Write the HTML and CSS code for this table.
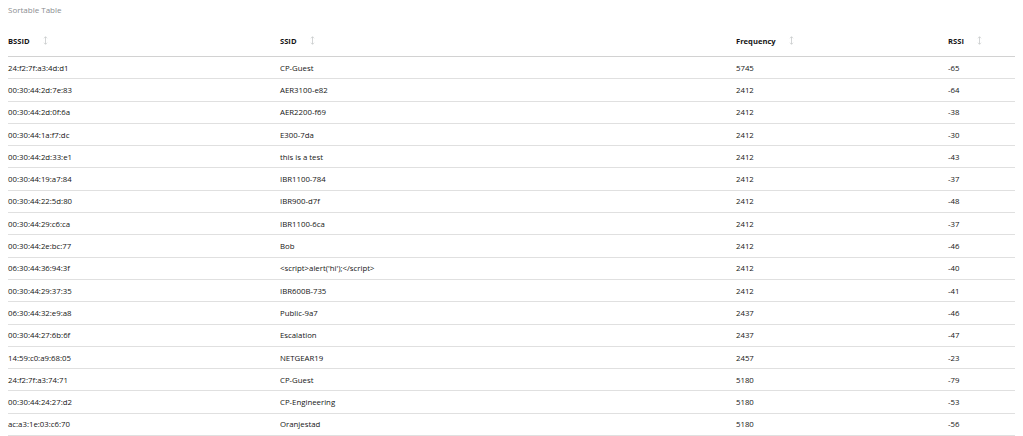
FILE: index.html
```html
<!DOCTYPE html>
<html>
<head>
<meta charset="utf-8">
<link rel="stylesheet" href="styles.css">
</head>
<body>
<div class="page">
  <div class="caption">Sortable Table</div>
  <table class="tbl">
    <colgroup>
      <col class="c1"><col class="c2"><col class="c3"><col class="c4">
    </colgroup>
    <thead>
      <tr>
        <th><span class="th">BSSID<svg class="sort" viewBox="0 0 6 10"><path d="M3 0.5V9.5M1.2 2.3L3 0.5 4.8 2.3M1.2 7.7L3 9.5 4.8 7.7"/></svg></span></th>
        <th><span class="th">SSID<svg class="sort" viewBox="0 0 6 10"><path d="M3 0.5V9.5M1.2 2.3L3 0.5 4.8 2.3M1.2 7.7L3 9.5 4.8 7.7"/></svg></span></th>
        <th><span class="th">Frequency<svg class="sort" viewBox="0 0 6 10"><path d="M3 0.5V9.5M1.2 2.3L3 0.5 4.8 2.3M1.2 7.7L3 9.5 4.8 7.7"/></svg></span></th>
        <th><span class="th">RSSI<svg class="sort" viewBox="0 0 6 10"><path d="M3 0.5V9.5M1.2 2.3L3 0.5 4.8 2.3M1.2 7.7L3 9.5 4.8 7.7"/></svg></span></th>
      </tr>
    </thead>
    <tbody>
      <tr><td>24:f2:7f:a3:4d:d1</td><td>CP-Guest</td><td>5745</td><td>-65</td></tr>
      <tr><td>00:30:44:2d:7e:83</td><td>AER3100-e82</td><td>2412</td><td>-64</td></tr>
      <tr><td>00:30:44:2d:0f:6a</td><td>AER2200-f69</td><td>2412</td><td>-38</td></tr>
      <tr><td>00:30:44:1a:f7:dc</td><td>E300-7da</td><td>2412</td><td>-30</td></tr>
      <tr><td>00:30:44:2d:33:e1</td><td>this is a test</td><td>2412</td><td>-43</td></tr>
      <tr><td>00:30:44:19:a7:84</td><td>IBR1100-784</td><td>2412</td><td>-37</td></tr>
      <tr><td>00:30:44:22:5d:80</td><td>IBR900-d7f</td><td>2412</td><td>-48</td></tr>
      <tr><td>00:30:44:29:c6:ca</td><td>IBR1100-6ca</td><td>2412</td><td>-37</td></tr>
      <tr><td>00:30:44:2e:bc:77</td><td>Bob</td><td>2412</td><td>-46</td></tr>
      <tr><td>06:30:44:36:94:3f</td><td>&lt;script&gt;alert('hi');&lt;/script&gt;</td><td>2412</td><td>-40</td></tr>
      <tr><td>00:30:44:29:37:35</td><td>IBR600B-735</td><td>2412</td><td>-41</td></tr>
      <tr><td>06:30:44:32:e9:a8</td><td>Public-9a7</td><td>2437</td><td>-46</td></tr>
      <tr><td>00:30:44:27:6b:6f</td><td>Escalation</td><td>2437</td><td>-47</td></tr>
      <tr><td>14:59:c0:a9:68:05</td><td>NETGEAR19</td><td>2457</td><td>-23</td></tr>
      <tr><td>24:f2:7f:a3:74:71</td><td>CP-Guest</td><td>5180</td><td>-79</td></tr>
      <tr><td>00:30:44:24:27:d2</td><td>CP-Engineering</td><td>5180</td><td>-53</td></tr>
      <tr><td>ac:a3:1e:03:c6:70</td><td>Oranjestad</td><td>5180</td><td>-56</td></tr>
    </tbody>
  </table>
</div>
</body>
</html>
```

FILE: styles.css
```css
html, body {
  margin: 0;
  padding: 0;
  background: #ffffff;
}
body {
  font-family: "Open Sans", "Noto Sans", sans-serif;
  color: #151515;
}
.page {
  padding: 4px 8px 0 8px;
}
.caption {
  font-size: 8px;
  color: #8a8d90;
  line-height: 12px;
  height: 21px;
}
.tbl {
  width: 100%;
  border-collapse: collapse;
  table-layout: fixed;
}
.c1 { width: 272px; }
.c2 { width: 456px; }
.c3 { width: 212px; }
.tbl th {
  text-align: left;
  font-size: 7.6px;
  font-weight: 700;
  height: 31px;
  padding: 0;
  border-bottom: 1px solid #d2d2d2;
  vertical-align: middle;
}
.th {
  display: inline-flex;
  align-items: center;
  gap: 13px;
}
.sort {
  width: 5px;
  height: 9px;
  fill: none;
  stroke: #c4c6c8;
  stroke-width: 0.9;
}
.tbl td {
  font-size: 7.8px;
  height: 21.3px;
  padding: 0;
  border-bottom: 1px solid #e0e0e0;
  vertical-align: middle;
  white-space: nowrap;
}
```
